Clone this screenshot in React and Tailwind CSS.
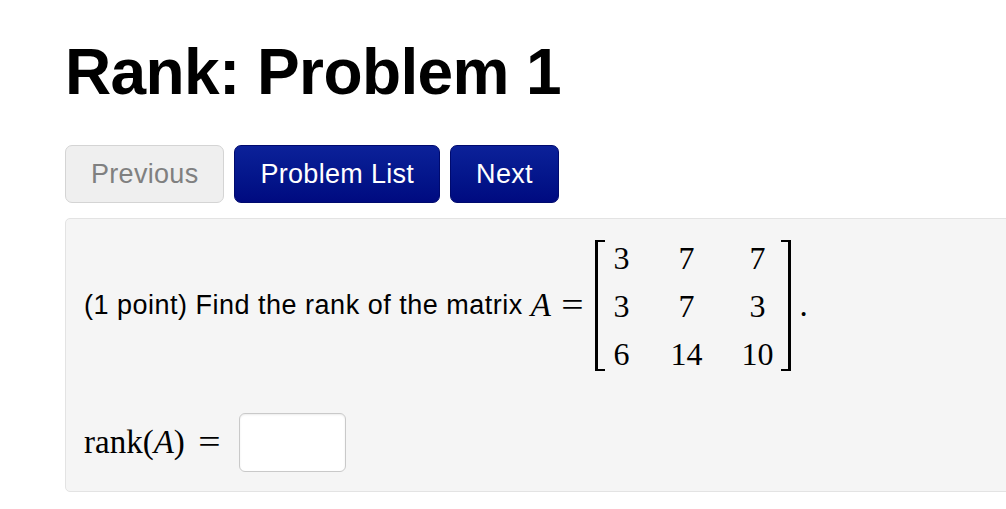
export default function App() {
  const sans = { fontFamily: '"Liberation Sans", Arial, Helvetica, sans-serif' };
  const serif = { fontFamily: '"Liberation Serif", "Times New Roman", serif' };
  const rows = [
    ["3", "7", "7"],
    ["3", "7", "3"],
    ["6", "14", "10"],
  ];
  return (
    <div className="w-[1006px] h-[509px] overflow-hidden bg-white text-black" style={sans}>
      <div className="pl-[65px] pt-[40px]">
        <h1 className="text-[64px] leading-none font-bold tracking-[-0.6px]">Rank: Problem 1</h1>

        <div className="mt-[41px] flex gap-[10px] text-[27px] tracking-[0.3px]">
          <button className="h-[58px] px-[25px] rounded-[7px] border border-[#d4d4d4] bg-[#efefef] text-[#808080]">
            Previous
          </button>
          <button className="h-[58px] px-[25px] rounded-[7px] border border-[#000a6e] bg-gradient-to-b from-[#0c2199] to-[#000a80] text-white">
            Problem List
          </button>
          <button className="h-[58px] px-[25px] rounded-[7px] border border-[#000a6e] bg-gradient-to-b from-[#0c2199] to-[#000a80] text-white">
            Next
          </button>
        </div>

        <div className="mt-[15px] w-[980px] rounded-[5px] border border-[#e3e3e3] bg-[#f5f5f5] pl-[18px] pt-[21px] pb-[19px]">
          <div className="flex items-center h-[131px]">
            <span className="text-[27px] tracking-[0.5px] whitespace-pre">(1 point) Find the rank of the matrix </span>
            <span className="text-[33px] italic leading-none" style={serif}>A</span>
            <span className="inline-block text-[33px] leading-none ml-[12px] mr-[13px] scale-x-[1.2]" style={serif}>=</span>
            <div className="flex items-center h-[131px]" style={serif}>
              <div className="w-[10px] h-[131px] border-l-[3px] border-t-2 border-b-2 border-black" />
              <div className="grid grid-cols-[34px_96px_46px] text-[32px] leading-[48px] text-center">
                {rows.map((r, i) =>
                  r.map((v, j) => <div key={i + "-" + j}>{v}</div>)
                )}
              </div>
              <div className="w-[10px] h-[131px] border-r-[3px] border-t-2 border-b-2 border-black" />
            </div>
            <span className="text-[33px] leading-none mt-0 ml-[9px]" style={serif}>.</span>
          </div>

          <div className="mt-[42px] flex items-center">
            <span className="text-[33px] leading-none mt-0 whitespace-pre" style={serif}>
              rank(<span className="italic">A</span>)
            </span>
            <span className="inline-block text-[33px] leading-none mt-0 ml-[15px] scale-x-[1.2]" style={serif}>=</span>
            <input
              type="text"
              className="ml-[21px] w-[107px] h-[59px] rounded-[6px] border border-[#c9c9c9] bg-white shadow-[inset_0_1px_2px_rgba(0,0,0,0.08)] outline-none"
            />
          </div>
        </div>
      </div>
    </div>
  );
}
